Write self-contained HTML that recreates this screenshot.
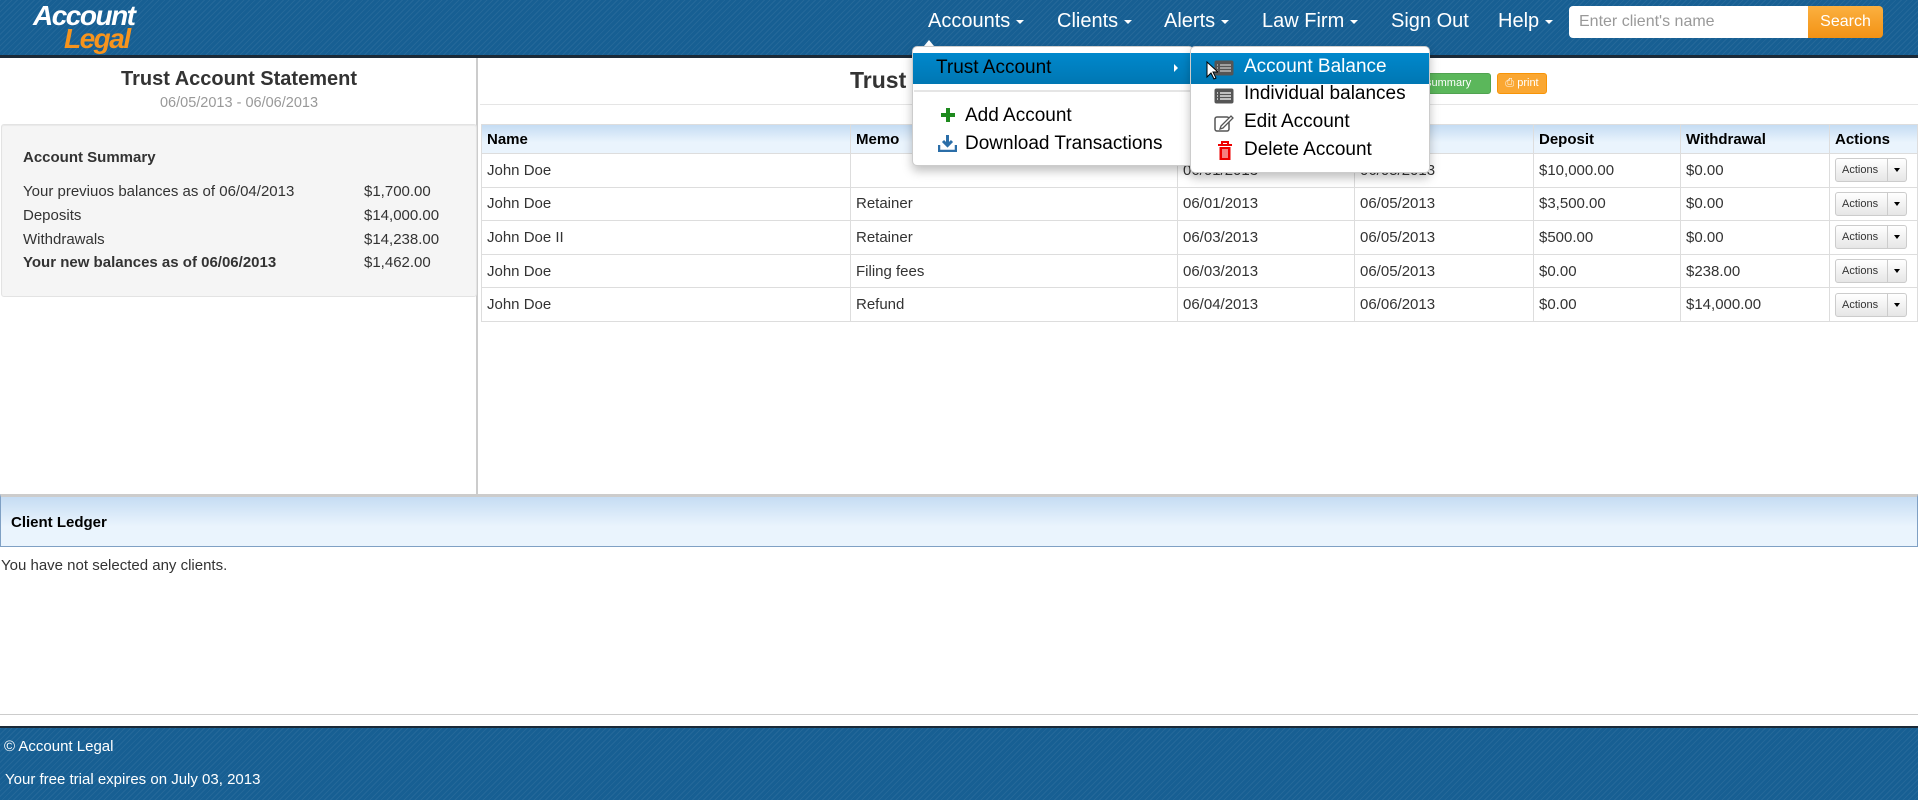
<!DOCTYPE html>
<html><head><meta charset="utf-8"><style>
*{box-sizing:border-box;margin:0;padding:0}
body{width:1918px;height:800px;overflow:hidden;font-family:"Liberation Sans",sans-serif;color:#333;background:#fff;position:relative;font-size:15px}
.stripe{background-color:#175f93;background-image:repeating-linear-gradient(135deg,rgba(255,255,255,0.06) 0 1px,transparent 1px 4px)}
#nav{position:absolute;left:0;top:0;width:1918px;height:58px;border-bottom:3px solid #1b2a38}
.logo1{position:absolute;left:33px;top:0px;font:italic bold 28px "Liberation Sans",sans-serif;color:#fff;letter-spacing:-1.5px}
.logo2{position:absolute;left:64px;top:23px;font:italic bold 28px "Liberation Sans",sans-serif;color:#f7941d;letter-spacing:-1.5px}
.ni{position:absolute;top:10px;color:#fff;font-size:20px}
.car{display:inline-block;width:0;height:0;border-left:4px solid transparent;border-right:4px solid transparent;border-top:4px solid #fff;vertical-align:middle;margin-left:6px}
#search{position:absolute;left:1569px;top:6px;width:240px;height:32px;background:#fff;border-radius:4px 0 0 4px;font-size:16px;color:#999;padding:7px 10px}
#sbtn{position:absolute;left:1808px;top:6px;width:75px;height:32px;background:linear-gradient(#fbb040,#f39214);border-radius:0 4px 4px 0;color:#fff;font-size:16px;text-align:center;line-height:32px}
#left{position:absolute;left:0;top:58px;width:478px;height:436px;border-right:2px solid #ccc}
.t1{position:absolute;left:0;width:478px;text-align:center;top:68px;font-weight:bold;font-size:20px;color:#333}
.t2{position:absolute;left:0;width:478px;text-align:center;top:95px;font-size:14.5px;color:#999}
#sum{position:absolute;left:1px;top:124px;width:476px;height:173px;background:#f5f5f5;border:1px solid #e3e3e3;border-radius:3px;box-shadow:inset 0 1px 1px rgba(0,0,0,.05)}
#sum div{position:absolute;font-size:15px;color:#333}
.hd{background:linear-gradient(#c5dcf3,#eaf4fd 60%,#eaf4fd)}
table{position:absolute;left:481px;top:124px;width:1437px;border-collapse:collapse;font-size:15px}
td,th{border:1px solid #ddd;text-align:left;padding:0 5px;height:33.6px;color:#333}
th{color:#000;font-weight:bold;height:29px}
.ab{display:inline-block;border:1px solid #ccc;border-radius:3px;background:linear-gradient(#fff,#e6e6e6);font-size:11px;height:24px;line-height:22px;padding-left:6px;width:72px;position:relative;vertical-align:middle}
.ab:after{content:"";position:absolute;right:6px;top:9px;border-left:3px solid transparent;border-right:3px solid transparent;border-top:4px solid #000}
.ab i{position:absolute;left:51px;top:0;bottom:0;border-left:1px solid #ccc}
#cl{position:absolute;left:0;top:494px;width:1918px;height:53px;border:1px solid #7fa0c4;border-top:3px solid #ccc}
#foot{position:absolute;left:0;top:726px;width:1918px;height:74px;border-top:2px solid #1b2a38;color:#fff;font-size:15px}
.dd{position:absolute;background:#fff;border:1px solid rgba(0,0,0,.2);border-radius:5px;box-shadow:0 5px 10px rgba(0,0,0,.25)}
.hl{position:absolute;left:0;right:0;background:linear-gradient(#0088cc,#0077b3);}
.mi{position:absolute;font-size:19px;color:#000}
</style></head><body>
<div id="nav" class="stripe">
<div class="logo1">Account</div><div class="logo2">Legal</div>
<div class="ni" style="left:928px">Accounts<span class="car"></span></div>
<div class="ni" style="left:1057px">Clients<span class="car"></span></div>
<div class="ni" style="left:1164px">Alerts<span class="car"></span></div>
<div class="ni" style="left:1262px">Law Firm<span class="car"></span></div>
<div class="ni" style="left:1391px">Sign Out</div>
<div class="ni" style="left:1498px">Help<span class="car"></span></div>
<div id="search">Enter client's name</div><div id="sbtn">Search</div>
</div>
<div id="left">
</div>
<div class="t1">Trust Account Statement</div>
<div class="t2">06/05/2013 - 06/06/2013</div>
<div id="sum">
<div style="left:21px;top:24px;font-weight:bold">Account Summary</div>
<div style="left:21px;top:58px">Your previuos balances as of 06/04/2013</div><div style="left:362px;top:58px">$1,700.00</div>
<div style="left:21px;top:82px">Deposits</div><div style="left:362px;top:82px">$14,000.00</div>
<div style="left:21px;top:106px">Withdrawals</div><div style="left:362px;top:106px">$14,238.00</div>
<div style="left:21px;top:129px;font-weight:bold">Your new balances as of 06/06/2013</div><div style="left:362px;top:129px">$1,462.00</div>
</div>
<div style="position:absolute;left:850px;top:67px;font-size:23px;font-weight:bold;color:#333">Trust Account Transactions</div>
<div style="position:absolute;left:1394px;top:73px;width:97px;height:21px;background:#5bb75b;border:1px solid #51a351;border-radius:3px;color:#fff;font-size:11px;text-align:center;line-height:19px">⇒ summary</div>
<div style="position:absolute;left:1497px;top:73px;width:50px;height:21px;background:#faa732;border:1px solid #f89406;border-radius:3px;color:#fff;font-size:11px;text-align:center;line-height:19px">⎙ print</div>
<div style="position:absolute;left:480px;top:104px;width:1438px;border-top:1px solid #e5e5e5"></div>
<table>
<tr class="hd"><th style="width:369px">Name</th><th style="width:327px">Memo</th><th style="width:177px">Date</th><th style="width:179px">Post Date</th><th style="width:147px">Deposit</th><th style="width:149px">Withdrawal</th><th>Actions</th></tr>
<tr><td>John Doe</td><td></td><td>06/01/2013</td><td>06/05/2013</td><td>$10,000.00</td><td>$0.00</td><td><span class="ab">Actions<i></i></span></td></tr>
<tr><td>John Doe</td><td>Retainer</td><td>06/01/2013</td><td>06/05/2013</td><td>$3,500.00</td><td>$0.00</td><td><span class="ab">Actions<i></i></span></td></tr>
<tr><td>John Doe II</td><td>Retainer</td><td>06/03/2013</td><td>06/05/2013</td><td>$500.00</td><td>$0.00</td><td><span class="ab">Actions<i></i></span></td></tr>
<tr><td>John Doe</td><td>Filing fees</td><td>06/03/2013</td><td>06/05/2013</td><td>$0.00</td><td>$238.00</td><td><span class="ab">Actions<i></i></span></td></tr>
<tr><td>John Doe</td><td>Refund</td><td>06/04/2013</td><td>06/06/2013</td><td>$0.00</td><td>$14,000.00</td><td><span class="ab">Actions<i></i></span></td></tr>
</table>
<div id="cl" class="hd"><div style="position:absolute;left:10px;top:17px;font-weight:bold;color:#000;font-size:15px">Client Ledger</div></div>
<div style="position:absolute;left:1px;top:557px;font-size:15px;color:#333">You have not selected any clients.</div>
<div style="position:absolute;left:0;top:714px;width:1918px;border-top:1px solid #ccc"></div>
<div id="foot" class="stripe">
<div style="position:absolute;left:4px;top:10px">© Account Legal</div>
<div style="position:absolute;left:5px;top:43px">Your free trial expires on July 03, 2013</div>
</div>
<!-- dropdowns -->
<div style="position:absolute;left:924px;top:40px;border-left:5px solid transparent;border-right:5px solid transparent;border-bottom:6px solid #fff"></div>
<div class="dd" style="left:912px;top:46px;width:282px;height:120px">
<div class="hl" style="top:6px;height:31px"></div>
<div class="mi" style="left:23px;top:10px">Trust Account</div>
<div style="position:absolute;left:261px;top:17px;border-top:4px solid transparent;border-bottom:4px solid transparent;border-left:4px solid #fff"></div>
<div style="position:absolute;left:1px;right:1px;top:43px;border-top:2px solid #e5e5e5"></div>
<svg style="position:absolute;left:27px;top:60px" width="16" height="16"><path d="M8 1v14M1 8h14" stroke="#1e8a1e" stroke-width="4"/></svg>
<div class="mi" style="left:52px;top:58px">Add Account</div>
<svg style="position:absolute;left:25px;top:87px" width="19" height="18" viewBox="0 0 19 18"><path d="M9.5 1v10M5 7l4.5 4.5L14 7" stroke="#2b6ea8" stroke-width="3" fill="none"/><path d="M1 11v6h17v-6" stroke="#2b6ea8" stroke-width="2.5" fill="none"/></svg>
<div class="mi" style="left:52px;top:86px">Download Transactions</div>
</div>
<div class="dd" style="left:1190px;top:46px;width:240px;height:127px">
<div class="hl" style="top:6px;height:31px"></div>
<svg style="position:absolute;left:23px;top:13px" width="20" height="16"><rect x="0.5" y="0.5" width="19" height="15" rx="2" fill="#555" /><path d="M6 5h11M6 8h11M6 11h11M3 5h1M3 8h1M3 11h1" stroke="#ccc" stroke-width="1.2"/></svg>
<div class="mi" style="left:53px;top:9px;color:#fff">Account Balance</div>
<svg style="position:absolute;left:23px;top:41px" width="20" height="16"><rect x="0.5" y="0.5" width="19" height="15" rx="2" fill="#555" /><path d="M6 5h11M6 8h11M6 11h11M3 5h1M3 8h1M3 11h1" stroke="#fff" stroke-width="1.2"/></svg>
<div class="mi" style="left:53px;top:36px">Individual balances</div>
<svg style="position:absolute;left:23px;top:67px" width="20" height="18"><rect x="1" y="3" width="14" height="14" rx="2" fill="none" stroke="#555" stroke-width="1.5"/><path d="M7 12l10-10 2 2-10 10-3 1z" fill="#fff" stroke="#555" stroke-width="1.3"/></svg>
<div class="mi" style="left:53px;top:64px">Edit Account</div>
<svg style="position:absolute;left:26px;top:94px" width="16" height="20"><path d="M1 4h14M5 4V1h6v3" stroke="#e00" stroke-width="2" fill="none"/><rect x="2.5" y="6" width="11" height="13" fill="#e00"/><path d="M6 8v9M8 8v9M10 8v9" stroke="#fff" stroke-width="1"/></svg>
<div class="mi" style="left:53px;top:92px">Delete Account</div>
</div>
<svg style="position:absolute;left:1206px;top:61px" width="12" height="19"><path d="M1 1v15l4-4 3 6 2-1-3-6h5z" fill="#fff" stroke="#000" stroke-width="1"/></svg>
</body></html>
